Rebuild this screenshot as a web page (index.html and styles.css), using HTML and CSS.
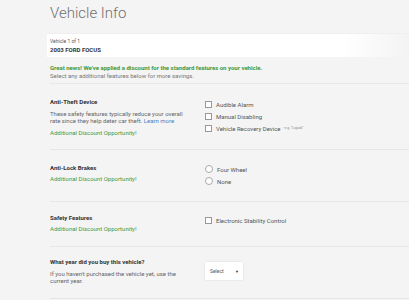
FILE: index.html
```html
<!DOCTYPE html>
<html>
<head>
<meta charset="utf-8">
<link rel="stylesheet" href="styles.css">
</head>
<body>
<div class="page">
  <h1 class="title">Vehicle Info</h1>
  <div class="card">
    <div class="card-sub">Vehicle 1 of 1</div>
    <div class="card-name">2003 FORD FOCUS</div>
  </div>
  <div class="intro">
    <div class="green bold">Great news! We've applied a discount for the standard features on your vehicle.</div>
    <div class="muted">Select any additional features below for more savings.</div>
  </div>
  <div class="row row-theft">
    <div class="left">
      <div class="label">Anti-Theft Device</div>
      <div class="desc">These safety features typically reduce your overall rate since they help deter car theft. <span class="link">Learn more</span></div>
      <div class="green opp">Additional Discount Opportunity!</div>
    </div>
    <div class="right">
      <div class="opt"><span class="box"></span>Audible Alarm</div>
      <div class="opt"><span class="box"></span>Manual Disabling</div>
      <div class="opt"><span class="box"></span>Vehicle Recovery Device<span class="eg">- e.g. "Lojack"</span></div>
    </div>
  </div>
  <div class="row row-abs">
    <div class="left">
      <div class="label">Anti-Lock Brakes</div>
      <div class="green opp2">Additional Discount Opportunity!</div>
    </div>
    <div class="right">
      <div class="opt"><span class="radio"></span>Four Wheel</div>
      <div class="opt"><span class="radio"></span>None</div>
    </div>
  </div>
  <div class="row row-safety">
    <div class="left">
      <div class="label">Safety Features</div>
      <div class="green opp2">Additional Discount Opportunity!</div>
    </div>
    <div class="right">
      <div class="opt"><span class="box"></span>Electronic Stability Control</div>
    </div>
  </div>
  <div class="row row-year">
    <div class="left">
      <div class="label">What year did you buy this vehicle?</div>
      <div class="desc">If you haven't purchased the vehicle yet, use the current year.</div>
    </div>
    <div class="right">
      <div class="select"><span>Select</span><span class="caret">▼</span></div>
    </div>
  </div>
</div>
</body>
</html>
```

FILE: styles.css
```css
html, body {
  margin: 0;
  padding: 0;
  background: #f4f4f4;
  overflow: hidden;
}
body {
  font-family: Roboto, "Liberation Sans", Arial, sans-serif;
  color: #666;
  width: 409px;
  height: 300px;
}
.page {
  padding-left: 50px;
}
.title {
  margin: 0;
  padding-top: 4px;
  font-size: 15px;
  line-height: 18px;
  font-weight: 300;
  color: #707070;
  height: 33px;
  box-sizing: border-box;
}
.card {
  margin-left: -3px;
  padding: 4px 0 3px 3px;
  height: 24px;
  box-sizing: border-box;
  background: linear-gradient(to right, #fff 0%, #fff 82%, #f3f3f3 100%);
  border-top: 1px solid #efefef;
}
.card-sub {
  font-size: 5px;
  line-height: 7px;
  color: #555;
}
.card-name {
  font-size: 6px;
  line-height: 9px;
  font-weight: 700;
  color: #333;
}
.intro {
  padding-top: 7px;
  padding-bottom: 3px;
  border-bottom: 1px solid #e8e8e8;
  font-size: 6px;
  line-height: 8px;
}
.green { color: #3e9a3e; }
.bold { font-weight: 700; }
.muted { color: #777; }
.row {
  display: grid;
  grid-template-columns: 155px 1fr;
  border-bottom: 1px solid #e6e6e6;
}
.row-theft { padding: 14px 0 12px; }
.row-abs { padding: 14px 0 14px; }
.row-safety { padding: 12px 0 13px; }
.row-year { padding: 11px 0 13px; }
.label {
  font-size: 6px;
  line-height: 8px;
  font-weight: 700;
  color: #333;
}
.desc {
  margin-top: 3.5px;
  font-size: 6px;
  line-height: 7.5px;
  color: #666;
  padding-right: 15px;
}
.link { color: #4a83c3; }
.opp {
  margin-top: 4.5px;
  font-size: 6px;
  line-height: 8px;
}
.opp2 {
  margin-top: 3px;
  font-size: 6px;
  line-height: 8px;
}
.right {
  font-size: 6px;
  color: #555;
}
.opt {
  display: flex;
  align-items: center;
  height: 12px;
}
.row-abs .right { margin-top: -1px; }
.box {
  width: 5px;
  height: 5px;
  border: 1px solid #999;
  background: #fff;
  margin-right: 4px;
  flex: none;
}
.radio {
  width: 6px;
  height: 6px;
  border: 1px solid #aaa;
  border-radius: 50%;
  background: #fff;
  margin-right: 4px;
  flex: none;
}
.eg {
  font-size: 3.5px;
  color: #888;
  margin-left: 2px;
}
.select {
  margin-top: 4px;
  width: 38px;
  height: 18px;
  background: #fff;
  box-shadow: 0 0 2px rgba(0,0,0,0.15);
  border-radius: 1px;
  display: flex;
  align-items: center;
  justify-content: space-between;
  padding: 0 4px 0 5px;
  box-sizing: border-box;
  font-size: 5px;
  color: #555;
}
.caret {
  font-size: 4px;
  color: #333;
}
```
